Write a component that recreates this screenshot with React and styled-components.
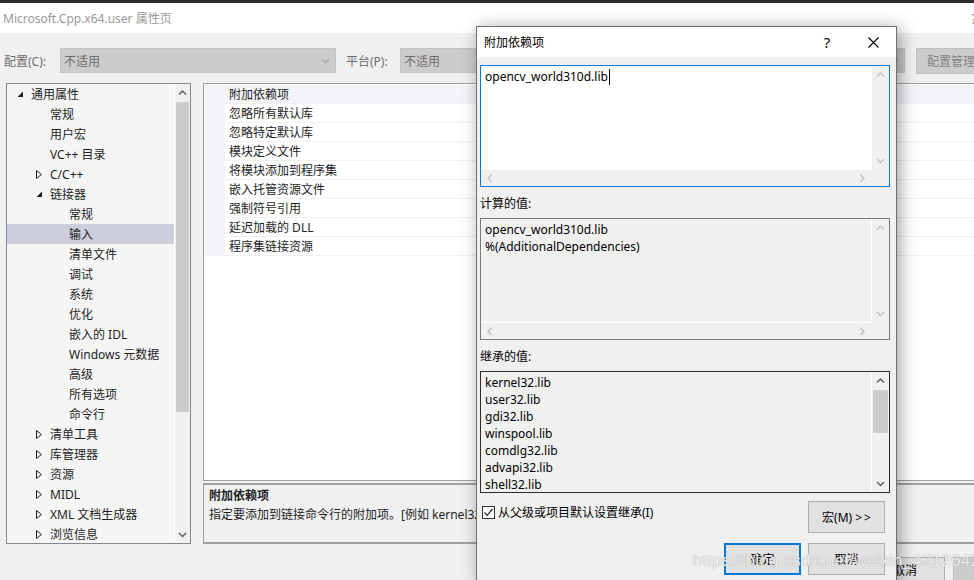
import styled, { createGlobalStyle } from 'styled-components';

const GlobalStyle = createGlobalStyle`
  * { box-sizing: border-box; }
  html, body { margin: 0; padding: 0; }
  body {
    background: #f0f0f0;
    font-family: "Noto Sans", "Noto Sans CJK SC", sans-serif;
    font-size: 12px;
    color: #1e1e1e;
    overflow: hidden;
  }
`;

const treeItems = [
  { label: '通用属性', level: 0, arrow: 'open' },
  { label: '常规', level: 1 },
  { label: '用户宏', level: 1 },
  { label: 'VC++ 目录', level: 1 },
  { label: 'C/C++', level: 1, arrow: 'closed' },
  { label: '链接器', level: 1, arrow: 'open' },
  { label: '常规', level: 2 },
  { label: '输入', level: 2, selected: true },
  { label: '清单文件', level: 2 },
  { label: '调试', level: 2 },
  { label: '系统', level: 2 },
  { label: '优化', level: 2 },
  { label: '嵌入的 IDL', level: 2 },
  { label: 'Windows 元数据', level: 2 },
  { label: '高级', level: 2 },
  { label: '所有选项', level: 2 },
  { label: '命令行', level: 2 },
  { label: '清单工具', level: 1, arrow: 'closed' },
  { label: '库管理器', level: 1, arrow: 'closed' },
  { label: '资源', level: 1, arrow: 'closed' },
  { label: 'MIDL', level: 1, arrow: 'closed' },
  { label: 'XML 文档生成器', level: 1, arrow: 'closed' },
  { label: '浏览信息', level: 1, arrow: 'closed' },
];

const properties = [
  '附加依赖项',
  '忽略所有默认库',
  '忽略特定默认库',
  '模块定义文件',
  '将模块添加到程序集',
  '嵌入托管资源文件',
  '强制符号引用',
  '延迟加载的 DLL',
  '程序集链接资源',
];

const inherited = [
  'kernel32.lib',
  'user32.lib',
  'gdi32.lib',
  'winspool.lib',
  'comdlg32.lib',
  'advapi32.lib',
  'shell32.lib',
];

function Chevron({ dir, color = '#c2c2c2' }) {
  const vertical = dir === 'up' || dir === 'down';
  const pts = {
    up: '1,5.5 4.5,2 8,5.5',
    down: '1,2 4.5,5.5 8,2',
    left: '5.5,1 2,4.5 5.5,8',
    right: '1.5,1 5,4.5 1.5,8',
  }[dir];
  return (
    <svg width={vertical ? 9 : 7} height={vertical ? 7 : 9} viewBox={vertical ? '0 0 9 7' : '0 0 7 9'}>
      <polyline points={pts} fill="none" stroke={color} strokeWidth="1.5" />
    </svg>
  );
}

function Expander({ type }) {
  if (type === 'open') {
    return (
      <svg width="7" height="7" viewBox="0 0 7 7">
        <polygon points="6,0.5 6,6 0.5,6" fill="#1e1e1e" />
      </svg>
    );
  }
  return (
    <svg width="7" height="9" viewBox="0 0 7 9">
      <polygon points="0.5,0.5 5.5,4.5 0.5,8.5" fill="none" stroke="#1e1e1e" strokeWidth="1" />
    </svg>
  );
}

export default function App() {
  return (
    <Screen>
      <GlobalStyle />
      <TopStrip />
      <TitleBar>
        <TitleText>Microsoft.Cpp.x64.user 属性页</TitleText>
        <TitleHelp>?</TitleHelp>
      </TitleBar>

      <ConfigRow>
        <ConfigLabel $w={56}>配置(C):</ConfigLabel>
        <Combo $w={276}>
          <span>不适用</span>
          <Chevron dir="down" color="#a8a8a8" />
        </Combo>
        <ConfigLabel $w={54} $ml={10}>平台(P):</ConfigLabel>
        <Combo $w={505}>
          <span>不适用</span>
          <Chevron dir="down" color="#a8a8a8" />
        </Combo>
        <ConfigButton>配置管理器(O)...</ConfigButton>
      </ConfigRow>

      <Main>
        <TreeBox>
          <TreeList>
            {treeItems.map((item, i) => (
              <TreeRow key={i} $level={item.level} $selected={item.selected}>
                <ExpanderSlot>{item.arrow && <Expander type={item.arrow} />}</ExpanderSlot>
                {item.label}
              </TreeRow>
            ))}
          </TreeList>
          <ScrollBar $w={16}>
            <ArrowBox><Chevron dir="up" color="#606060" /></ArrowBox>
            <Track>
              <Thumb $top={1} $h={310} />
            </Track>
            <ArrowBox><Chevron dir="down" color="#606060" /></ArrowBox>
          </ScrollBar>
        </TreeBox>

        <RightColumn>
          <PropGrid>
            {properties.map((p, i) => (
              <PropRow key={p} $active={i === 0}>
                <Gutter />
                <PropCell>{p}</PropCell>
              </PropRow>
            ))}
          </PropGrid>
          <DescPanel>
            <DescTitle>附加依赖项</DescTitle>
            <DescText>指定要添加到链接命令行的附加项。[例如 kernel32.lib]</DescText>
          </DescPanel>
        </RightColumn>
      </Main>

      <Footer>
        <WinButton>确定</WinButton>
        <WinButton>取消</WinButton>
        <WinButton $disabled>应用(A)</WinButton>
      </Footer>

      <Dialog>
        <DlgTitleBar>
          <DlgTitle>附加依赖项</DlgTitle>
          <DlgTitleButton>?</DlgTitleButton>
          <DlgTitleButton>
            <svg width="11" height="11" viewBox="0 0 11 11">
              <path d="M0.5 0.5 L10.5 10.5 M10.5 0.5 L0.5 10.5" stroke="#000" strokeWidth="1.1" />
            </svg>
          </DlgTitleButton>
        </DlgTitleBar>

        <DlgBody>
          <TextBox $border="#0078d7" $bg="#fff" $hscroll>
            <TextContent>
              <Line>opencv_world310d.lib<Caret /></Line>
            </TextContent>
            <VScroll>
              <ArrowBox><Chevron dir="up" /></ArrowBox>
              <ArrowBox><Chevron dir="down" /></ArrowBox>
            </VScroll>
            <HScroll>
              <ArrowBox><Chevron dir="left" /></ArrowBox>
              <ArrowBox><Chevron dir="right" /></ArrowBox>
            </HScroll>
            <Corner />
          </TextBox>

          <FieldLabel>计算的值:</FieldLabel>
          <TextBox $border="#7a7a7a" $bg="#f0f0f0" $hscroll>
            <TextContent>
              <Line>opencv_world310d.lib</Line>
              <Line>%(AdditionalDependencies)</Line>
            </TextContent>
            <VScroll>
              <ArrowBox><Chevron dir="up" /></ArrowBox>
              <ArrowBox><Chevron dir="down" /></ArrowBox>
            </VScroll>
            <HScroll>
              <ArrowBox><Chevron dir="left" /></ArrowBox>
              <ArrowBox><Chevron dir="right" /></ArrowBox>
            </HScroll>
            <Corner />
          </TextBox>

          <FieldLabel>继承的值:</FieldLabel>
          <TextBox $border="#2b2b2b" $bg="#f0f0f0" $h={122}>
            <TextContent>
              {inherited.map(l => <Line key={l}>{l}</Line>)}
            </TextContent>
            <VScroll>
              <ArrowBox><Chevron dir="up" color="#606060" /></ArrowBox>
              <Track>
                <Thumb $top={1} $h={43} />
              </Track>
              <ArrowBox><Chevron dir="down" color="#606060" /></ArrowBox>
            </VScroll>
          </TextBox>

          <CheckRow>
            <CheckLabel>
              <CheckBox>
                <svg width="11" height="11" viewBox="0 0 11 11">
                  <polyline points="1.5,5.5 4.2,8.3 9.5,2" fill="none" stroke="#222" strokeWidth="1.2" />
                </svg>
              </CheckBox>
              从父级或项目默认设置继承(I)
            </CheckLabel>
            <DlgButton>宏(M) &gt;&#8201;&gt;</DlgButton>
          </CheckRow>

          <ButtonRow>
            <DlgButton $primary>确定</DlgButton>
            <DlgButton>取消</DlgButton>
          </ButtonRow>
        </DlgBody>
      </Dialog>

      <Watermark>https://blog.csdn.net/weixin_42126427</Watermark>
    </Screen>
  );
}

const Screen = styled.div`
  position: relative;
  width: 974px;
  height: 580px;
  overflow: hidden;
  background: #f0f0f0;
`;

const TopStrip = styled.div`
  height: 3px;
  background: #2d2d30;
`;

const TitleBar = styled.div`
  height: 30px;
  background: #fff;
  display: flex;
  align-items: center;
  justify-content: space-between;
  padding-left: 3px;
`;

const TitleText = styled.span`
  color: #999;
  font-size: 12px;
`;

const TitleHelp = styled.span`
  color: #999;
  font-size: 14px;
  margin-right: -3px;
`;

const ConfigRow = styled.div`
  height: 50px;
  display: flex;
  align-items: center;
  padding: 5px 0 0 4px;
  white-space: nowrap;
`;

const ConfigLabel = styled.span`
  width: ${p => p.$w}px;
  margin-left: ${p => p.$ml || 0}px;
  color: #6d6d6d;
  flex-shrink: 0;
`;

const Combo = styled.div`
  width: ${p => p.$w}px;
  height: 25px;
  flex-shrink: 0;
  background: #cccccc;
  border: 1px solid #c4c4c4;
  color: #6d6d6d;
  display: flex;
  align-items: center;
  justify-content: space-between;
  padding: 0 5px 0 3px;
`;

const ConfigButton = styled.div`
  margin-left: 11px;
  height: 26px;
  padding: 0 10px;
  flex-shrink: 0;
  display: flex;
  align-items: center;
  background: #cccccc;
  border: 1px solid #bfbfbf;
  color: #838383;
`;

const Main = styled.div`
  height: 461px;
  display: flex;
  padding-left: 6px;
`;

const TreeBox = styled.div`
  width: 185px;
  height: 461px;
  flex-shrink: 0;
  border: 1px solid #828790;
  background: #f5f5f5;
  display: flex;
`;

const TreeList = styled.div`
  flex: 1;
  overflow: hidden;
`;

const TreeRow = styled.div`
  height: 20px;
  display: flex;
  align-items: center;
  padding-left: ${p => 10 + p.$level * 19}px;
  background: ${p => (p.$selected ? '#cccedb' : 'transparent')};
  white-space: nowrap;
`;

const ExpanderSlot = styled.span`
  width: 14px;
  flex-shrink: 0;
  display: flex;
  align-items: center;
`;

const ScrollBar = styled.div`
  width: ${p => p.$w}px;
  flex-shrink: 0;
  display: flex;
  flex-direction: column;
  background: #f0f0f0;
  border-left: 1px solid #fff;
`;

const ArrowBox = styled.div`
  width: 17px;
  height: 17px;
  flex-shrink: 0;
  display: flex;
  align-items: center;
  justify-content: center;
  ${ScrollBar} & { width: 100%; }
`;

const Track = styled.div`
  flex: 1;
`;

const Thumb = styled.div`
  margin: ${p => p.$top}px 1px 0;
  height: ${p => p.$h}px;
  background: #cdcdcd;
`;

const RightColumn = styled.div`
  flex: 1;
  margin-left: 12px;
  margin-right: -30px;
  display: flex;
  flex-direction: column;
`;

const PropGrid = styled.div`
  height: 399px;
  border: 1px solid #a0a0a0;
  background: #fff;
  padding-top: 1px;
`;

const PropRow = styled.div`
  height: 19px;
  display: flex;
  background: ${p => (p.$active ? '#f2f4f8' : '#fff')};
`;

const Gutter = styled.div`
  width: 21px;
  flex-shrink: 0;
  background: #f4f5f8;
`;

const PropCell = styled.div`
  flex: 1;
  display: flex;
  align-items: center;
  padding-left: 4px;
  border-bottom: 1px solid #f0f0f0;
  white-space: nowrap;
`;

const DescPanel = styled.div`
  margin-top: 2px;
  height: 61px;
  border-top: 2px solid #a0a0a0;
  border-bottom: 2px solid #a0a0a0;
  border-left: 1px solid #a0a0a0;
  background: #f0f0f0;
  padding: 1px 0 0 5px;
  white-space: nowrap;
`;

const DescTitle = styled.div`
  font-weight: 700;
  line-height: 19px;
`;

const DescText = styled.div`
  line-height: 19px;
`;

const Footer = styled.div`
  height: 36px;
  display: flex;
  gap: 8px;
  padding: 13px 0 0 777px;
`;

const WinButton = styled.div`
  width: 80px;
  height: 26px;
  flex-shrink: 0;
  display: flex;
  align-items: center;
  justify-content: center;
  background: ${p => (p.$disabled ? '#cccccc' : '#e1e1e1')};
  border: 1px solid ${p => (p.$disabled ? '#bfbfbf' : '#adadad')};
  color: ${p => (p.$disabled ? '#838383' : '#000')};
`;

const Dialog = styled.div`
  position: absolute;
  left: 476px;
  top: 26px;
  width: 421px;
  height: 557px;
  border: 1px solid #707070;
  background: #f0f0f0;
  box-shadow: 3px 2px 16px rgba(0, 0, 0, 0.38);
  display: flex;
  flex-direction: column;
  color: #000;
`;

const DlgTitleBar = styled.div`
  height: 30px;
  background: #fff;
  display: flex;
  align-items: center;
`;

const DlgTitle = styled.div`
  flex: 1;
  padding-left: 7px;
`;

const DlgTitleButton = styled.div`
  width: 46px;
  height: 30px;
  display: flex;
  align-items: center;
  justify-content: center;
  font-size: 15px;
`;

const DlgBody = styled.div`
  padding: 8px 6px 0 3px;
  display: flex;
  flex-direction: column;
`;

const TextBox = styled.div`
  height: ${p => p.$h || 122}px;
  border: 1px solid ${p => p.$border};
  background: ${p => p.$bg};
  display: grid;
  grid-template-columns: 1fr 18px;
  grid-template-rows: ${p => (p.$hscroll ? '1fr 17px' : '1fr')};
`;

const TextContent = styled.div`
  padding: 2px 4px;
  overflow: hidden;
  white-space: nowrap;
`;

const Line = styled.div`
  line-height: 17px;
  height: 17px;
  display: flex;
  align-items: center;
`;

const Caret = styled.span`
  display: inline-block;
  width: 1px;
  height: 16px;
  background: #000;
  margin-left: 1px;
`;

const VScroll = styled.div`
  display: flex;
  flex-direction: column;
  justify-content: space-between;
  background: #f0f0f0;
  border-left: 1px solid #fff;
`;

const HScroll = styled.div`
  display: flex;
  justify-content: space-between;
  background: #f0f0f0;
  border-top: 1px solid #fff;
`;

const Corner = styled.div`
  background: #f0f0f0;
`;

const FieldLabel = styled.div`
  line-height: 18px;
  padding: 8px 0 5px;
`;

const CheckRow = styled.div`
  margin-top: 8px;
  display: flex;
  justify-content: space-between;
  align-items: flex-start;
  padding-right: 5px;
`;

const CheckLabel = styled.div`
  display: flex;
  align-items: center;
  gap: 3px;
  padding: 2px 0 0 2px;
  line-height: 19px;
`;

const CheckBox = styled.span`
  width: 13px;
  height: 13px;
  border: 1px solid #333;
  background: #fff;
  display: flex;
  align-items: center;
  justify-content: center;
`;

const DlgButton = styled.div`
  width: 77px;
  height: 32px;
  display: flex;
  align-items: center;
  justify-content: center;
  background: #e1e1e1;
  border: ${p => (p.$primary ? '2px solid #0078d7' : '1px solid #adadad')};
`;

const ButtonRow = styled.div`
  margin-top: 10px;
  display: flex;
  justify-content: flex-end;
  gap: 7px;
  padding-right: 5px;
`;

const Watermark = styled.div`
  position: absolute;
  left: 693px;
  top: 551px;
  font-family: "Liberation Sans", Arial, sans-serif;
  font-size: 17px;
  color: rgba(255, 255, 255, 0.85);
  text-shadow: 0 0 1px rgba(110, 110, 110, 0.8);
  letter-spacing: 0.2px;
  white-space: nowrap;
  pointer-events: none;
`;
